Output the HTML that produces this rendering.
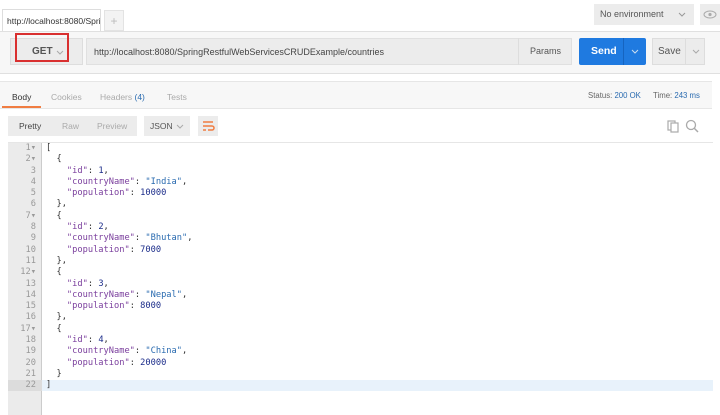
<!DOCTYPE html>
<html><head><meta charset="utf-8"><style>
*{box-sizing:border-box;margin:0;padding:0}
body{width:720px;height:415px;background:#fff;font-family:"Liberation Sans",sans-serif;position:relative;overflow:hidden;color:#333}
.a{position:absolute}
.mono{font-family:"DejaVu Sans Mono","Liberation Mono",monospace;font-size:8.7px}
.code div{height:11.3px;line-height:11.3px;white-space:pre}
.k{color:#7a3e9d}.s{color:#2a6bb0}.n{color:#1c2d8a}
.g div{height:11.3px;line-height:11.3px;text-align:right;padding-right:6px;color:#999}
.chev{position:absolute}
</style></head><body>
<!-- tabs -->
<div class="a" style="left:2px;top:9px;width:99px;height:23px;background:#fff;border:1px solid #ddd;border-bottom:none;font-size:8.5px;line-height:22px;padding-left:4px;white-space:nowrap;overflow:hidden">http://localhost:8080/Sprir</div>
<div class="a" style="left:104px;top:10px;width:20px;height:21px;background:#f3f3f3;border:1px solid #e3e3e3;color:#bbb;font-size:12px;text-align:center;line-height:20px">+</div>
<div class="a" style="left:594px;top:4px;width:100px;height:21px;background:#ececec;font-size:9px;line-height:21px;padding-left:6px;color:#555">No environment<svg class="chev" style="left:84px;top:8px" width="8" height="5"><path d="M1 1l3 3 3-3" stroke="#999" fill="none"/></svg></div>
<div class="a" style="left:700px;top:4px;width:20px;height:21px;background:#ececec"><svg width="20" height="21"><ellipse cx="10" cy="10.5" rx="6" ry="3.5" fill="none" stroke="#aaa"/><circle cx="10" cy="10.5" r="1.6" fill="#aaa"/></svg></div>
<!-- request bar -->
<div class="a" style="left:0;top:31px;width:720px;height:43px;background:#f7f7f7;border-top:1px solid #e0e0e0;border-bottom:1px solid #e0e0e0"></div>
<div class="a" style="left:10px;top:38px;width:73px;height:27px;background:#ececec;border:1px solid #ddd"></div>
<div class="a" style="left:15px;top:33px;width:54px;height:29px;border:2px solid #d93030;font-size:10px;font-weight:bold;color:#555;line-height:34px;padding-left:15px">GET<svg class="chev" style="left:39px;top:15px" width="8" height="5"><path d="M1 1l3 3 3-3" stroke="#aaa" fill="none"/></svg></div>
<div class="a" style="left:86px;top:38px;width:486px;height:27px;background:#ececec;border:1px solid #e0e0e0;font-size:9px;line-height:26px;padding-left:7px;color:#444">http://localhost:8080/SpringRestfulWebServicesCRUDExample/countries</div>
<div class="a" style="left:518px;top:38px;width:54px;height:27px;border-left:1px solid #ddd;font-size:9px;line-height:26px;text-align:center;color:#555">Params</div>
<div class="a" style="left:579px;top:38px;width:67px;height:27px;background:#1f7ae0;border-radius:2px;color:#fff;font-weight:bold;font-size:10.5px;line-height:27px;padding-left:12px">Send<span style="position:absolute;left:44px;top:0;width:1px;height:27px;background:#1664c0"></span><svg class="chev" style="left:52px;top:11px" width="8" height="5"><path d="M1 1l3 3 3-3" stroke="#cde" fill="none"/></svg></div>
<div class="a" style="left:652px;top:38px;width:53px;height:27px;background:#ececec;border:1px solid #ddd;font-size:10px;line-height:26px;padding-left:5px;color:#555">Save<span style="position:absolute;left:32px;top:0;width:1px;height:25px;background:#ddd"></span><svg class="chev" style="left:39px;top:10px" width="8" height="5"><path d="M1 1l3 3 3-3" stroke="#aaa" fill="none"/></svg></div>
<!-- response header -->
<div class="a" style="left:0;top:81px;width:712px;height:28px;background:#f7f7f7;border-top:1px solid #e6e6e6;border-bottom:1px solid #e6e6e6"></div>
<div class="a" style="left:12px;top:92px;font-size:8.5px;color:#333">Body</div>
<div class="a" style="left:2px;top:106px;width:39px;height:2px;background:#f07d42"></div>
<div class="a" style="left:51px;top:92px;font-size:8.5px;color:#aaa">Cookies</div>
<div class="a" style="left:100px;top:92px;font-size:8.5px;color:#aaa">Headers <span style="color:#2a6bb0">(4)</span></div>
<div class="a" style="left:167px;top:92px;font-size:8.5px;color:#aaa">Tests</div>
<div class="a" style="left:588px;top:91px;font-size:7.8px;color:#666">Status: <span style="color:#2a6bb0">200 OK</span></div>
<div class="a" style="left:653px;top:91px;font-size:7.8px;color:#666">Time: <span style="color:#2a6bb0">243 ms</span></div>
<!-- toolbar -->
<div class="a" style="left:8px;top:116px;width:129px;height:20px;background:#ececec;font-size:8.5px;line-height:20px"><span style="position:absolute;left:11px;color:#444">Pretty</span><span style="position:absolute;left:54px;color:#aaa">Raw</span><span style="position:absolute;left:89px;color:#aaa">Preview</span></div>
<div class="a" style="left:144px;top:116px;width:46px;height:20px;background:#ececec;font-size:8.5px;line-height:20px;padding-left:6px;color:#555">JSON<svg class="chev" style="left:32px;top:8px" width="8" height="5"><path d="M1 1l3 3 3-3" stroke="#aaa" fill="none"/></svg></div>
<div class="a" style="left:198px;top:116px;width:20px;height:20px;background:#ececec"><svg width="20" height="20"><path d="M5 6h10M5 10h9a2 2 0 0 1 0 4h-4M5 14h3" stroke="#f07d42" stroke-width="1.5" fill="none"/></svg></div>
<svg class="a" style="left:664px;top:118px" width="40" height="16"><rect x="4" y="3" width="7" height="9" fill="none" stroke="#aaa" stroke-width="1.2"/><rect x="7" y="5" width="7" height="9" fill="#fff" stroke="#aaa" stroke-width="1.2"/><circle cx="27" cy="7" r="4.5" fill="none" stroke="#aaa" stroke-width="1.3"/><path d="M30 10l4 4" stroke="#aaa" stroke-width="1.5"/></svg>
<!-- editor -->
<div class="a" style="left:8px;top:142px;width:705px;height:273px;border-top:1px solid #e6e6e6"></div>
<div class="a" style="left:8px;top:143px;width:34px;height:272px;background:#ebebeb;border-right:1px solid #ccc"></div>
<div class="a" style="left:42px;top:380px;width:671px;height:11.3px;background:#e8f2fb"></div>
<div class="a" style="left:8px;top:380px;width:34px;height:11.3px;background:#dcdcdc"></div>
<div class="a g mono" style="left:8px;top:143px;width:34px">
<div>1▾</div><div>2▾</div><div>3 </div><div>4 </div><div>5 </div><div>6 </div><div>7▾</div><div>8 </div><div>9 </div><div>10 </div><div>11 </div><div>12▾</div><div>13 </div><div>14 </div><div>15 </div><div>16 </div><div>17▾</div><div>18 </div><div>19 </div><div>20 </div><div>21 </div><div>22 </div></div>
<div class="a code mono" style="left:46px;top:143px">
<div>[</div>
<div>  {</div>
<div>    <span class="k">"id"</span>: <span class="n">1</span>,</div>
<div>    <span class="k">"countryName"</span>: <span class="s">"India"</span>,</div>
<div>    <span class="k">"population"</span>: <span class="n">10000</span></div>
<div>  },</div>
<div>  {</div>
<div>    <span class="k">"id"</span>: <span class="n">2</span>,</div>
<div>    <span class="k">"countryName"</span>: <span class="s">"Bhutan"</span>,</div>
<div>    <span class="k">"population"</span>: <span class="n">7000</span></div>
<div>  },</div>
<div>  {</div>
<div>    <span class="k">"id"</span>: <span class="n">3</span>,</div>
<div>    <span class="k">"countryName"</span>: <span class="s">"Nepal"</span>,</div>
<div>    <span class="k">"population"</span>: <span class="n">8000</span></div>
<div>  },</div>
<div>  {</div>
<div>    <span class="k">"id"</span>: <span class="n">4</span>,</div>
<div>    <span class="k">"countryName"</span>: <span class="s">"China"</span>,</div>
<div>    <span class="k">"population"</span>: <span class="n">20000</span></div>
<div>  }</div>
<div>]</div>
</div>
</body></html>
